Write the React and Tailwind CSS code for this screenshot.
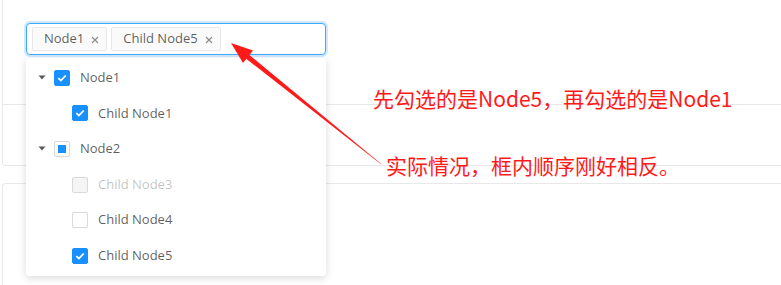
import React from 'react';

const rows = [
  { id: 'n1', label: 'Node1', level: 0, state: 'checked', caret: true },
  { id: 'c1', label: 'Child Node1', level: 1, state: 'checked' },
  { id: 'n2', label: 'Node2', level: 0, state: 'indeterminate', caret: true },
  { id: 'c3', label: 'Child Node3', level: 1, state: 'disabled' },
  { id: 'c4', label: 'Child Node4', level: 1, state: 'unchecked' },
  { id: 'c5', label: 'Child Node5', level: 1, state: 'checked' },
];

function Checkbox({ state }) {
  if (state === 'checked') {
    return (
      <span className="w-4 h-4 rounded-[2px] bg-[#1890ff] border border-[#1890ff] flex items-center justify-center shrink-0">
        <svg width="10" height="8" viewBox="0 0 10 8">
          <path d="M1.3 4.1 L3.9 6.5 L8.7 1.5" fill="none" stroke="white" strokeWidth="1.8" />
        </svg>
      </span>
    );
  }
  if (state === 'indeterminate') {
    return (
      <span className="w-4 h-4 rounded-[2px] bg-white border border-[#d9d9d9] flex items-center justify-center shrink-0">
        <span className="w-2 h-2 bg-[#1890ff]" />
      </span>
    );
  }
  if (state === 'disabled') {
    return <span className="block w-4 h-4 rounded-[2px] bg-[#f5f5f5] border border-[#d9d9d9] shrink-0" />;
  }
  return <span className="block w-4 h-4 rounded-[2px] bg-white border border-[#d9d9d9] shrink-0" />;
}

function Tag({ children }) {
  return (
    <span className="h-6 flex items-center pl-[11px] pr-[7px] gap-[7px] bg-[#fafafa] border border-[#e8e8e8] rounded-[2px] text-[rgba(0,0,0,0.65)]">
      <span>{children}</span>
      <svg width="8" height="8" viewBox="0 0 8 8" className="mt-[1px]">
        <path d="M1 1 L7 7 M7 1 L1 7" stroke="rgba(0,0,0,0.45)" strokeWidth="1.1" />
      </svg>
    </span>
  );
}

export default function App() {
  return (
    <div
      className="relative w-[781px] h-[285px] bg-white overflow-hidden"
      style={{ fontFamily: '"Open Sans", "Noto Sans", sans-serif' }}
    >
      {/* background cards */}
      <div className="pl-[2px]">
        <div className="h-[166px] border-l border-b border-[#e8e8e8] rounded-bl-[4px] flex flex-col">
          <div className="h-[105px] border-b border-[#e8e8e8] pl-[23px] pt-[23px]">
            {/* select box */}
            <div className="relative w-[300px] h-8 rounded-[4px] border border-[#40a9ff] shadow-[0_0_0_2px_rgba(24,144,255,0.2)] bg-white flex items-center pl-[5px] gap-1 text-[13px]">
              <Tag>Node1</Tag>
              <Tag>Child Node5</Tag>

              {/* dropdown */}
              <div className="absolute left-[-1px] top-[34px] w-[300px] h-[218px] bg-white rounded-[4px] shadow-[0_2px_8px_rgba(0,0,0,0.15)] pt-[2px] z-10">
                {rows.map((r) => (
                  <div
                    key={r.id}
                    className={`h-[35.6px] flex items-center pl-2 ${r.level === 1 ? 'ml-[18px]' : ''}`}
                  >
                    <span className="w-4 h-4 flex items-center justify-center shrink-0">
                      {r.caret && (
                        <svg width="8" height="5" viewBox="0 0 8 5">
                          <path d="M0.5 0.5 L7.5 0.5 L4 4.5 Z" fill="rgba(0,0,0,0.65)" />
                        </svg>
                      )}
                    </span>
                    <span className="ml-1 block">
                      <Checkbox state={r.state} />
                    </span>
                    <span
                      className={`ml-[10px] text-[13px] ${
                        r.state === 'disabled' ? 'text-[rgba(0,0,0,0.25)]' : 'text-[rgba(0,0,0,0.65)]'
                      }`}
                    >
                      {r.label}
                    </span>
                  </div>
                ))}
              </div>
            </div>
          </div>
        </div>
        <div className="mt-[17px] h-[120px] border-l border-t border-[#e8e8e8] rounded-tl-[4px]" />
      </div>

      {/* annotations */}
      <svg className="absolute left-0 top-0 pointer-events-none z-20" width="781" height="285">
        <polygon points="381.3,164.4 380.7,163.6 247.6,53.5 244.5,57.4" fill="#ff1a1a" />
        <polygon points="231,43 253,50.5 243,63" fill="#ff1a1a" />
      </svg>
      <div
        className="absolute left-[373px] top-[84px] text-[21px] leading-[28px] text-[#ff1a1a] whitespace-nowrap z-20"
        style={{ fontFamily: '"Noto Sans CJK SC", "Noto Sans", sans-serif' }}
      >
        先勾选的是Node5，再勾选的是Node1
      </div>
      <div
        className="absolute left-[386px] top-[151px] text-[21px] leading-[28px] text-[#ff1a1a] whitespace-nowrap z-20"
        style={{ fontFamily: '"Noto Sans CJK SC", "Noto Sans", sans-serif' }}
      >
        实际情况，框内顺序刚好相反。
      </div>
    </div>
  );
}
